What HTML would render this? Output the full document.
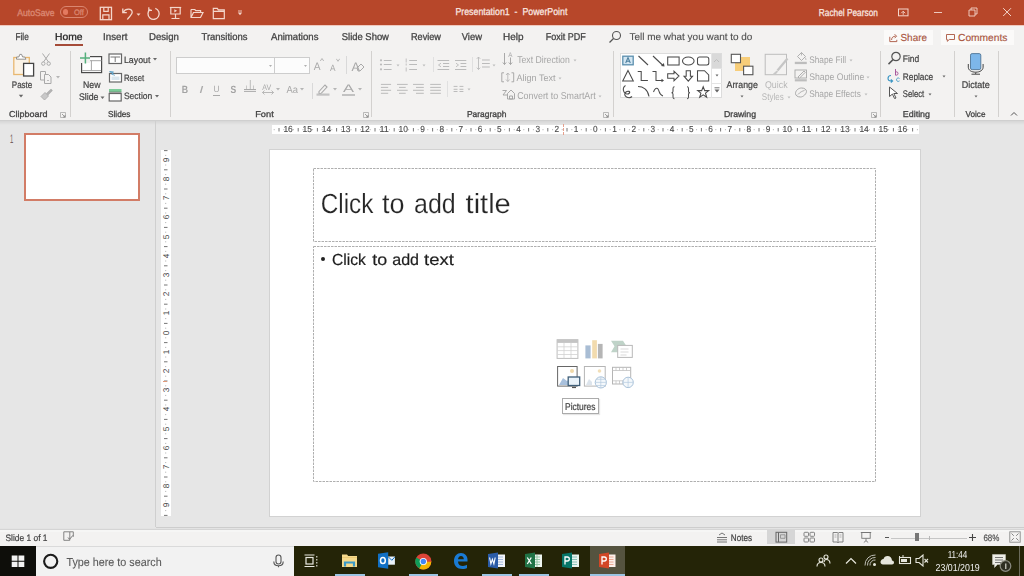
<!DOCTYPE html><html><head><meta charset="utf-8"><style>
html,body{margin:0;padding:0;}
body{width:1024px;height:576px;overflow:hidden;position:relative;background:#E6E6E6;font-family:"Liberation Sans",sans-serif;text-rendering:geometricPrecision;}
div,span,svg{position:absolute;}
span{line-height:1;white-space:pre;transform-origin:0 0;}
</style></head><body>
<div style="left:0px;top:0px;width:1024px;height:25px;background:#B7472A;"></div>
<div style="left:59.8px;top:5.7px;width:28.6px;height:12.8px;background:transparent;border:1.4px solid #DA8670;border-radius:7px;box-sizing:border-box;"></div>
<div style="left:62.7px;top:9.4px;width:5.4px;height:5.4px;background:#E47A60;border-radius:50%;"></div>
<svg style="left:99px;top:6px;" width="14" height="15" viewBox="0 0 14 15"><rect x="1.3" y="1.3" width="11.2" height="12.4" fill="none" stroke="#F4D6CB" stroke-width="1.3"/><path d="M4.8 1.5v3.8h4.4V1.5M3.8 13.5V8.8h6.2v4.7" fill="none" stroke="#F4D6CB" stroke-width="1.2"/></svg>
<svg style="left:121px;top:6px;" width="20" height="15" viewBox="0 0 20 15"><path d="M2.2 6.2C4.5 2.2 11 2 11.2 6.3 11.3 9 8 10.5 6.3 13.5" fill="none" stroke="#F4D6CB" stroke-width="1.3"/><path d="M1.8 2.6v4h4" fill="none" stroke="#F4D6CB" stroke-width="1.3"/><path d="M15.5 7.5h4l-2 2.2z" fill="#F4D6CB"/></svg>
<svg style="left:146px;top:6px;" width="15" height="15" viewBox="0 0 15 15"><path d="M4.3 3.2A5.6 5.6 0 1 0 9.3 2.4" fill="none" stroke="#F4D6CB" stroke-width="1.3"/><path d="M2.8 1.2v3.2h3.2" fill="none" stroke="#F4D6CB" stroke-width="1.2"/></svg>
<svg style="left:169px;top:6px;" width="13" height="14" viewBox="0 0 13 14"><path d="M0.8 1.5h11.4" stroke="#F4D6CB" stroke-width="1.2"/><path d="M1.8 1.5v6.5h9.4V1.5" fill="none" stroke="#F4D6CB" stroke-width="1.2"/><path d="M6.5 8v4M2.5 12.5h8" fill="none" stroke="#F4D6CB" stroke-width="1.2"/><path d="M5.3 3.2l2.8 1.6-2.8 1.6z" fill="#F4D6CB"/></svg>
<svg style="left:190px;top:8px;" width="14" height="11" viewBox="0 0 14 11"><path d="M1 1.5h3.8l1 1.2h4.8v2M1 1.5v8h9.5l2.5-5H3.5L1 9.5" fill="none" stroke="#F4D6CB" stroke-width="1.2"/></svg>
<svg style="left:212px;top:7px;" width="14" height="13" viewBox="0 0 14 13"><path d="M1.3 1.3h4l1 1.5h6v8.9H1.3z M1.3 4.3h11" fill="none" stroke="#F4D6CB" stroke-width="1.2"/></svg>
<svg style="left:237px;top:10px;" width="6" height="6" viewBox="0 0 6 6"><path d="M1 1h4" stroke="#F4D6CB" stroke-width="0.9"/><path d="M0.8 2.6h4.4l-2.2 2.6z" fill="#F4D6CB"/></svg>
<svg style="left:897px;top:8px;" width="12" height="9" viewBox="0 0 12 9"><rect x="1.5" y="1" width="9.5" height="6.8" fill="none" stroke="#F4D6CB" stroke-width="1"/><path d="M4.2 5.2l2-2 2 2M6.2 3.4v3.4" fill="none" stroke="#F4D6CB" stroke-width="0.9"/></svg>
<div style="left:934px;top:12px;width:8px;height:1px;background:#EDC9BE;"></div>
<svg style="left:968px;top:7px;" width="10" height="10" viewBox="0 0 10 10"><path d="M1 3h6v6H1z M3 3V1h6v6H7" fill="none" stroke="#F4D6CB" stroke-width="0.9"/></svg>
<svg style="left:1002px;top:7px;" width="10" height="10" viewBox="0 0 10 10"><path d="M1.2 1.2l7.8 7.8M9 1.2l-7.8 7.8" stroke="#F4D6CB" stroke-width="1"/></svg>
<div style="left:0px;top:25px;width:1024px;height:95px;background:#F3F2F1;"></div>
<div style="left:0px;top:25px;width:1024px;height:1px;background:#F0C9BE;"></div>
<div style="left:55px;top:43.8px;width:28px;height:2px;background:#A54B38;"></div>
<svg style="left:608px;top:30px;" width="14" height="14" viewBox="0 0 14 14"><circle cx="8.5" cy="5.5" r="4" fill="none" stroke="#555" stroke-width="1.1"/><path d="M5.5 8.5l-4 4" stroke="#555" stroke-width="1.3"/></svg>
<div style="left:883.5px;top:29.5px;width:49px;height:15px;background:#FBFAF9;"></div>
<div style="left:941px;top:29.5px;width:73px;height:15px;background:#FBFAF9;"></div>
<svg style="left:889px;top:33px;" width="10" height="10" viewBox="0 0 10 10"><path d="M0.8 3.8v4.8h7V6.8" fill="none" stroke="#A9563F" stroke-width="0.9"/><path d="M2.6 7c0-2.6 1.5-3.8 4-3.8M5.6 1.2l2 2-2 2" fill="none" stroke="#A9563F" stroke-width="0.9"/></svg>
<svg style="left:946px;top:34px;" width="10" height="9" viewBox="0 0 10 9"><path d="M0.5 0.5h8v5H3.3L1.3 7.3V5.5H0.5z" fill="none" stroke="#A9563F" stroke-width="0.9"/></svg>
<div style="left:70px;top:50.7px;width:1px;height:66.3px;background:#D3D1CF;"></div>
<div style="left:169.5px;top:50.7px;width:1px;height:66.3px;background:#D3D1CF;"></div>
<div style="left:371px;top:50.7px;width:1px;height:66.3px;background:#D3D1CF;"></div>
<div style="left:612.8px;top:50.7px;width:1px;height:66.3px;background:#D3D1CF;"></div>
<div style="left:879.8px;top:50.7px;width:1px;height:66.3px;background:#D3D1CF;"></div>
<div style="left:953.5px;top:50.7px;width:1px;height:66.3px;background:#D3D1CF;"></div>
<div style="left:997.5px;top:50.7px;width:1px;height:66.3px;background:#D3D1CF;"></div>
<div style="left:0px;top:120px;width:1024px;height:1px;background:#CFCFCF;"></div>
<div style="left:0px;top:121px;width:1024px;height:4px;background:linear-gradient(#D6D6D6,#E6E6E6);"></div>
<svg style="left:12px;top:52px;" width="24" height="26" viewBox="0 0 24 26"><rect x="1.8" y="5.5" width="15.5" height="17" fill="#FBF3E6" stroke="#E8B871" stroke-width="1.3"/><path d="M4.5 7.2h9.5l-1.2-2.2h-2.2l-1-2.6h-1.8l-1 2.6h-2.2z" fill="#fff" stroke="#888" stroke-width="0.9"/><rect x="11.6" y="11.4" width="10" height="12.6" fill="#fff" stroke="#444" stroke-width="1.3"/></svg>
<svg style="left:18px;top:94px;" width="6" height="4" viewBox="0 0 6 4"><path d="M0.8 0.8h4.4l-2.2 2.6z" fill="#666"/></svg>
<svg style="left:41px;top:53px;" width="10" height="13" viewBox="0 0 10 13"><path d="M1.5 0.5l6 8.5M8.5 0.5l-6 8.5" stroke="#AAA" stroke-width="1"/><circle cx="2.3" cy="10.6" r="1.7" fill="none" stroke="#AAA" stroke-width="1"/><circle cx="7.7" cy="10.6" r="1.7" fill="none" stroke="#AAA" stroke-width="1"/></svg>
<svg style="left:39px;top:71px;" width="14" height="13" viewBox="0 0 14 13"><path d="M1.5 0.5h5v8.5h-5z" fill="none" stroke="#A8A8A8" stroke-width="1"/><path d="M5.5 3.5h4l2.5 2.5v6.5h-6.5z" fill="#F3F2F1" stroke="#A8A8A8" stroke-width="1"/><path d="M8 9.5h2" stroke="#BBB" stroke-width="1"/></svg>
<svg style="left:56px;top:76px;" width="4" height="3" viewBox="0 0 4 3"><path d="M0 0h4l-2 2.5z" fill="#B5B5B5"/></svg>
<svg style="left:40px;top:88px;" width="13" height="13" viewBox="0 0 13 13"><path d="M1 8.5l4-4 3.5 3.5-4 4z" fill="#C8C8C8" stroke="#ABABAB" stroke-width="0.9"/><path d="M6.5 6l4.5-4.5 1 1-4.5 4.5" fill="none" stroke="#ABABAB" stroke-width="1.1"/></svg>
<svg style="left:79px;top:52px;" width="24" height="22" viewBox="0 0 24 22"><rect x="2.6" y="4.6" width="20" height="16" fill="#fff" stroke="#4A4A4A" stroke-width="1.2"/><path d="M2.6 8.7h20M12.4 8.7v9.5M3.2 18.6h19" stroke="#9A9A9A" stroke-width="0.9"/><rect x="1.5" y="3.5" width="9.5" height="7.5" fill="#F3F2F1"/><path d="M6.4 0.6v11M1 6h10" stroke="#55B07C" stroke-width="1.5"/></svg>
<svg style="left:100px;top:96px;" width="5" height="4" viewBox="0 0 5 4"><path d="M0.5 0.5h4l-2 2.5z" fill="#666"/></svg>
<svg style="left:108px;top:53px;" width="15" height="12" viewBox="0 0 15 12"><rect x="1" y="1" width="12.5" height="9.5" fill="#fff" stroke="#666" stroke-width="1.2"/><path d="M2.5 4h9.5M7.2 4v5" stroke="#777" stroke-width="1"/></svg>
<svg style="left:153px;top:58px;" width="4" height="3" viewBox="0 0 4 3"><path d="M0 0h4l-2 2.5z" fill="#666"/></svg>
<svg style="left:108px;top:70px;" width="15" height="13" viewBox="0 0 15 13"><rect x="1.5" y="3.5" width="12" height="8.5" fill="#fff" stroke="#666" stroke-width="1.2"/><path d="M3.5 6.5h8v3.5h-8z" fill="#D9E6EE"/><path d="M1.5 1.5l3.5 0.5-1 3" fill="none" stroke="#5EA1C8" stroke-width="1.2"/><path d="M1.8 1.8c2 0.5 4 2 4.5 4" fill="none" stroke="#5EA1C8" stroke-width="1"/></svg>
<svg style="left:108px;top:88px;" width="15" height="14" viewBox="0 0 15 14"><rect x="1" y="1" width="12.5" height="3" fill="#7CCB98"/><rect x="1.2" y="5.5" width="12" height="7.5" fill="#fff" stroke="#666" stroke-width="1.2"/><path d="M1 4.2h12.5" stroke="#666" stroke-width="0.8"/></svg>
<svg style="left:155px;top:95px;" width="4" height="3" viewBox="0 0 4 3"><path d="M0 0h4l-2 2.5z" fill="#666"/></svg>
<div style="left:176.3px;top:57.2px;width:98.4px;height:16.4px;background:#FCFCFC;border:1px solid #CDCDCD;box-sizing:border-box;"></div>
<div style="left:274.2px;top:57.2px;width:35.4px;height:16.4px;background:#FCFCFC;border:1px solid #CDCDCD;box-sizing:border-box;"></div>
<svg style="left:268.5px;top:64.5px;" width="4" height="3" viewBox="0 0 4 3"><path d="M0 0h3l-1.5 2z" fill="#B0B0B0"/></svg>
<svg style="left:303.5px;top:64.5px;" width="4" height="3" viewBox="0 0 4 3"><path d="M0 0h3l-1.5 2z" fill="#B0B0B0"/></svg>
<svg style="left:320px;top:58px;" width="4" height="4" viewBox="0 0 4 4"><path d="M0.3 3l1.7-2.5 1.7 2.5" fill="none" stroke="#A9A9A9" stroke-width="0.8"/></svg>
<svg style="left:335.5px;top:58px;" width="4" height="4" viewBox="0 0 4 4"><path d="M0.3 0.8l1.7 2.5 1.7-2.5" fill="none" stroke="#A9A9A9" stroke-width="0.8"/></svg>
<div style="left:345.5px;top:56px;width:1px;height:18px;background:#D9D9D9;"></div>
<svg style="left:356px;top:63px;" width="9" height="9" viewBox="0 0 9 9"><path d="M1 5l4-4 3 3-4 4H2z" fill="#F3F2F1" stroke="#A9A9A9" stroke-width="1"/></svg>
<div style="left:213px;top:94.5px;width:7px;height:1px;background:#A9A9A9;"></div>
<svg style="left:243px;top:79px;" width="14" height="14" viewBox="0 0 14 14"><path d="M7.3 1v9" stroke="#B5B5B5" stroke-width="0.9"/><path d="M1 10.5h12M1 12.4h12" stroke="#A9A9A9" stroke-width="1"/><path d="M3.5 10V6.5M10.5 10V6.5" stroke="#BDBDBD" stroke-width="0.8"/></svg>
<svg style="left:261.5px;top:90px;" width="12" height="5" viewBox="0 0 12 5"><path d="M0.5 2.5h11M2.5 0.5l-2 2 2 2M9.5 0.5l2 2-2 2" fill="none" stroke="#A9A9A9" stroke-width="0.8"/></svg>
<svg style="left:276px;top:88px;" width="4" height="3" viewBox="0 0 4 3"><path d="M0 0h4l-2 2.5z" fill="#B5B5B5"/></svg>
<svg style="left:300px;top:88px;" width="4" height="3" viewBox="0 0 4 3"><path d="M0 0h4l-2 2.5z" fill="#B5B5B5"/></svg>
<div style="left:311.6px;top:83px;width:1px;height:16px;background:#D9D9D9;"></div>
<svg style="left:316px;top:82px;" width="14" height="14" viewBox="0 0 14 14"><path d="M3 9.5l6-6.5 2 2-6 6.5H3z" fill="none" stroke="#A9A9A9" stroke-width="1.1"/><rect x="0.5" y="11.5" width="13" height="2.2" fill="#C2C2C2"/></svg>
<svg style="left:333px;top:88px;" width="4" height="3" viewBox="0 0 4 3"><path d="M0 0h4l-2 2.5z" fill="#B5B5B5"/></svg>
<div style="left:342.4px;top:93.5px;width:12.3px;height:2.2px;background:#C2C2C2;"></div>
<svg style="left:358px;top:88px;" width="4" height="3" viewBox="0 0 4 3"><path d="M0 0h4l-2 2.5z" fill="#B5B5B5"/></svg>
<svg style="left:60.2px;top:111.5px;" width="6" height="6" viewBox="0 0 6 6"><path d="M0.5 0.5h5v5h-5z" fill="none" stroke="#AAA" stroke-width="0.8"/><path d="M2 2l3 3M5 3v2H3" fill="none" stroke="#888" stroke-width="0.8"/></svg>
<svg style="left:362.5px;top:111.5px;" width="6" height="6" viewBox="0 0 6 6"><path d="M0.5 0.5h5v5h-5z" fill="none" stroke="#AAA" stroke-width="0.8"/><path d="M2 2l3 3M5 3v2H3" fill="none" stroke="#888" stroke-width="0.8"/></svg>
<svg style="left:603.2px;top:111.5px;" width="6" height="6" viewBox="0 0 6 6"><path d="M0.5 0.5h5v5h-5z" fill="none" stroke="#AAA" stroke-width="0.8"/><path d="M2 2l3 3M5 3v2H3" fill="none" stroke="#888" stroke-width="0.8"/></svg>
<svg style="left:870.8px;top:111.5px;" width="6" height="6" viewBox="0 0 6 6"><path d="M0.5 0.5h5v5h-5z" fill="none" stroke="#AAA" stroke-width="0.8"/><path d="M2 2l3 3M5 3v2H3" fill="none" stroke="#888" stroke-width="0.8"/></svg>
<svg style="left:376px;top:55px;" width="20" height="18" viewBox="0 0 20 18"><circle cx="5" cy="5.3" r="1.1" fill="#BBBBBB"/><circle cx="5" cy="9.5" r="1.1" fill="#BBBBBB"/><circle cx="5" cy="14.3" r="1.1" fill="#BBBBBB"/><path d="M7.8 5.5h7.8" stroke="#BBBBBB" stroke-width="1"/><path d="M7.8 9.5h7.8" stroke="#BBBBBB" stroke-width="1"/><path d="M7.8 14.5h7.8" stroke="#BBBBBB" stroke-width="1"/></svg>
<svg style="left:396.4px;top:64px;" width="4" height="3" viewBox="0 0 4 3"><path d="M0.5 0.5h3l-1.5 2z" fill="#BDBDBD"/></svg>
<svg style="left:403px;top:55px;" width="20" height="18" viewBox="0 0 20 18"><path d="M3.2 3.5v4M3.2 8.5v2M3.2 12.5v4" stroke="#BBBBBB" stroke-width="0.9"/><path d="M6.2 5.5h7.8" stroke="#BBBBBB" stroke-width="1"/><path d="M6.2 9.5h7.8" stroke="#BBBBBB" stroke-width="1"/><path d="M6.2 14.5h7.8" stroke="#BBBBBB" stroke-width="1"/></svg>
<svg style="left:421.8px;top:64px;" width="4" height="3" viewBox="0 0 4 3"><path d="M0.5 0.5h3l-1.5 2z" fill="#BDBDBD"/></svg>
<div style="left:432.6px;top:56.8px;width:1px;height:15.2px;background:#E0E0E0;"></div>
<svg style="left:436px;top:55px;" width="32" height="18" viewBox="0 0 32 18"><path d="M1.5 5.5h11.7" stroke="#BBBBBB" stroke-width="1"/><path d="M7 8.5h6.199999999999999" stroke="#BBBBBB" stroke-width="1"/><path d="M7 11.5h6.199999999999999" stroke="#BBBBBB" stroke-width="1"/><path d="M1.5 14.5h11.7" stroke="#BBBBBB" stroke-width="1"/><path d="M19 5.5h11.3" stroke="#BBBBBB" stroke-width="1"/><path d="M24.5 8.5h5.800000000000001" stroke="#BBBBBB" stroke-width="1"/><path d="M24.5 11.5h5.800000000000001" stroke="#BBBBBB" stroke-width="1"/><path d="M19 14.5h11.3" stroke="#BBBBBB" stroke-width="1"/><path d="M5 8.2l-2.5 1.8 2.5 1.8M20 8.2l2.5 1.8-2.5 1.8" fill="none" stroke="#BBBBBB" stroke-width="0.9"/></svg>
<div style="left:471.7px;top:56.8px;width:1px;height:15.2px;background:#E0E0E0;"></div>
<svg style="left:476px;top:56px;" width="16" height="16" viewBox="0 0 16 16"><path d="M2.5 1v12.5M0.8 2.8l1.7-1.8 1.7 1.8M0.8 11.7l1.7 1.8 1.7-1.8" fill="none" stroke="#BBBBBB" stroke-width="0.9"/><path d="M6 4h7.800000000000001" stroke="#BBBBBB" stroke-width="1"/><path d="M6 7.5h7.800000000000001" stroke="#BBBBBB" stroke-width="1"/><path d="M6 11h7.800000000000001" stroke="#BBBBBB" stroke-width="1"/></svg>
<svg style="left:492.3px;top:63.5px;" width="4" height="3" viewBox="0 0 4 3"><path d="M0.5 0.5h3l-1.5 2z" fill="#BDBDBD"/></svg>
<svg style="left:378px;top:80px;" width="70" height="18" viewBox="0 0 70 18"><path d="M2.9 4.4h10.2" stroke="#BBBBBB" stroke-width="1"/><path d="M2.9 7.4h7.299999999999999" stroke="#BBBBBB" stroke-width="1"/><path d="M2.9 10.3h10.2" stroke="#BBBBBB" stroke-width="1"/><path d="M2.9 13.3h7.299999999999999" stroke="#BBBBBB" stroke-width="1"/><path d="M19 4.4h10.7" stroke="#BBBBBB" stroke-width="1"/><path d="M21 7.4h6.699999999999999" stroke="#BBBBBB" stroke-width="1"/><path d="M19 10.3h10.7" stroke="#BBBBBB" stroke-width="1"/><path d="M21 13.3h6.699999999999999" stroke="#BBBBBB" stroke-width="1"/><path d="M35 4.4h10.799999999999997" stroke="#BBBBBB" stroke-width="1"/><path d="M38 7.4h7.799999999999997" stroke="#BBBBBB" stroke-width="1"/><path d="M35 10.3h10.799999999999997" stroke="#BBBBBB" stroke-width="1"/><path d="M38 13.3h7.799999999999997" stroke="#BBBBBB" stroke-width="1"/><path d="M52.2 4.4h10.699999999999996" stroke="#BBBBBB" stroke-width="1"/><path d="M52.2 7.4h10.699999999999996" stroke="#BBBBBB" stroke-width="1"/><path d="M52.2 10.3h10.699999999999996" stroke="#BBBBBB" stroke-width="1"/><path d="M52.2 13.3h10.699999999999996" stroke="#BBBBBB" stroke-width="1"/></svg>
<div style="left:447.3px;top:81.3px;width:1px;height:15.6px;background:#E0E0E0;"></div>
<svg style="left:452px;top:84px;" width="14" height="10" viewBox="0 0 14 10"><path d="M1.6 2.4h3.9" stroke="#BBBBBB" stroke-width="1"/><path d="M1.6 5.3h3.9" stroke="#BBBBBB" stroke-width="1"/><path d="M1.6 7.5h3.9" stroke="#BBBBBB" stroke-width="1"/><path d="M7.5 2.4h3.9000000000000004" stroke="#BBBBBB" stroke-width="1"/><path d="M7.5 5.3h3.9000000000000004" stroke="#BBBBBB" stroke-width="1"/><path d="M7.5 7.5h3.9000000000000004" stroke="#BBBBBB" stroke-width="1"/></svg>
<svg style="left:467.2px;top:88px;" width="4" height="3" viewBox="0 0 4 3"><path d="M0.5 0.5h3l-1.5 2z" fill="#BDBDBD"/></svg>
<svg style="left:502px;top:52px;" width="13" height="14" viewBox="0 0 13 14"><path d="M2.5 1v11.5M0.8 10.5l1.7 2 1.7-2" fill="none" stroke="#A0A0A0" stroke-width="0.9"/><path d="M8.5 5.5v7M6.8 10.5l1.7 2 1.7-2" fill="none" stroke="#A0A0A0" stroke-width="0.9"/><path d="M6.5 5l1.8-4.5 1.8 4.5M7.2 3.5h2.3" fill="none" stroke="#B0B0B0" stroke-width="0.7"/></svg>
<svg style="left:573.4px;top:59px;" width="4" height="3" viewBox="0 0 4 3"><path d="M0.5 0.5h3l-1.5 2z" fill="#BDBDBD"/></svg>
<svg style="left:501px;top:72px;" width="14" height="11" viewBox="0 0 14 11"><path d="M3 0.8H0.8v9H3M10.5 0.8h2.2v9h-2.2" fill="none" stroke="#A0A0A0" stroke-width="0.9"/><path d="M6.8 1v8.5M5 3l1.8-2 1.8 2M5 7.5l1.8 2 1.8-2" fill="none" stroke="#B0B0B0" stroke-width="0.8"/></svg>
<svg style="left:558px;top:77px;" width="4" height="3" viewBox="0 0 4 3"><path d="M0.5 0.5h3l-1.5 2z" fill="#BDBDBD"/></svg>
<svg style="left:502px;top:89px;" width="13" height="11" viewBox="0 0 13 11"><path d="M0.5 1.5h4L1 6h4M2.5 3.5" fill="none" stroke="#A0A0A0" stroke-width="0.9"/><path d="M5.5 4.5l3.5-3.5 3.5 3.5v5.5h-7z M7.5 7h3v3h-3z" fill="none" stroke="#A0A0A0" stroke-width="0.9"/></svg>
<svg style="left:598.4px;top:94.5px;" width="4" height="3" viewBox="0 0 4 3"><path d="M0.5 0.5h3l-1.5 2z" fill="#BDBDBD"/></svg>
<div style="left:620px;top:52.8px;width:101.7px;height:45px;background:#FFFFFF;border:1px solid #DCDCDC;box-sizing:border-box;"></div>
<div style="left:711.4px;top:53.5px;width:10px;height:14.5px;background:#D9D9D9;"></div>
<div style="left:711.4px;top:68px;width:10.3px;height:1px;background:#E4E4E4;"></div>
<div style="left:711.4px;top:82.6px;width:10.3px;height:1px;background:#E4E4E4;"></div>
<div style="left:711px;top:53px;width:1px;height:44.5px;background:#E4E4E4;"></div>
<svg style="left:713px;top:58px;" width="7" height="5" viewBox="0 0 7 5"><path d="M1 4l2.5-2.5 2.5 2.5" fill="none" stroke="#BBB" stroke-width="0.9"/></svg>
<svg style="left:714.5px;top:74px;" width="4" height="3" viewBox="0 0 4 3"><path d="M0.5 0.5h3l-1.5 2z" fill="#666"/></svg>
<svg style="left:713.5px;top:87px;" width="6" height="6" viewBox="0 0 6 6"><path d="M0.5 0.8h5" stroke="#666" stroke-width="0.9"/><path d="M0.5 2.5h5l-2.5 3z" fill="#666"/></svg>
<svg style="left:620px;top:54.5px;" width="92" height="46" viewBox="0 0 92 46">
<rect x="2.8" y="1.2" width="10.4" height="8.6" fill="#D3E6F2" stroke="#5B8FAE" stroke-width="1.3"/><path d="M5.7 8l2.3-5.5 2.3 5.5M6.6 6.2h2.8" fill="none" stroke="#4A7D9C" stroke-width="1.05"/>
<path d="M18.5 1l9.5 9" stroke="#4A4A4A" stroke-width="1.05"/>
<path d="M33 1l10 9.5" stroke="#4A4A4A" stroke-width="1.05"/><path d="M44.5 11.5l-3.5-0.6 2.9-2.9z" fill="#4A4A4A"/>
<rect x="47.7" y="2" width="11.4" height="8" fill="none" stroke="#4A4A4A" stroke-width="1.05"/>
<ellipse cx="68.3" cy="6" rx="5.8" ry="4" fill="none" stroke="#4A4A4A" stroke-width="1.05"/>
<rect x="77.5" y="2" width="11.3" height="8" rx="2" fill="none" stroke="#4A4A4A" stroke-width="1.05"/>
<path d="M8 15.5l5.3 10.5H2.7z" fill="none" stroke="#4A4A4A" stroke-width="1.05"/>
<path d="M17.7 16.5h3.5v9h6.7" fill="none" stroke="#4A4A4A" stroke-width="1.05"/>
<path d="M32.5 16.5h3.5v9h6.5" fill="none" stroke="#4A4A4A" stroke-width="1.05"/><path d="M44 25.5l-2.5-1.8v3.6z" fill="#4A4A4A"/>
<path d="M47.7 18.7h6.3v-2.5l5 4.8-5 4.8v-2.5h-6.3z" fill="none" stroke="#4A4A4A" stroke-width="1.05"/>
<path d="M66.2 15.7h4.2v5.5h2.2l-4.3 5-4.3-5h2.2z" fill="none" stroke="#4A4A4A" stroke-width="1.05"/>
<path d="M77.5 15.7h7l4.2 4.2v6h-11.2z" fill="none" stroke="#4A4A4A" stroke-width="1.05"/>
<path d="M5.5 30.5c-2 1-3 4-1.5 6.5s4 2.5 5.5 1c1-1.5-1.5-2.5-3.5-1s-1.5 4 0.5 5c2 1 4.5 0.5 5.5-0.5" fill="none" stroke="#4A4A4A" stroke-width="1.1"/>
<path d="M18 31.5c5 0 10 3 11 10" fill="none" stroke="#4A4A4A" stroke-width="1.05"/>
<path d="M33.5 37c1-3 3-5 4.5-3s1 6 5 7" fill="none" stroke="#4A4A4A" stroke-width="1.05"/>
<path d="M54.5 31.8c-1.5 0-1.5 0.5-1.5 2.5v2c0 1-0.5 1.5-1.5 1.5 1 0 1.5 0.5 1.5 1.5v2c0 2 0 2.5 1.5 2.5" fill="none" stroke="#4A4A4A" stroke-width="1.05"/>
<path d="M67 31.8c1.5 0 1.5 0.5 1.5 2.5v2c0 1 0.5 1.5 1.5 1.5-1 0-1.5 0.5-1.5 1.5v2c0 2 0 2.5-1.5 2.5" fill="none" stroke="#4A4A4A" stroke-width="1.05"/>
<path d="M83.2 31.8l1.5 3.8h4l-3.2 2.5 1.2 4.2-3.5-2.5-3.5 2.5 1.2-4.2-3.2-2.5h4z" fill="none" stroke="#4A4A4A" stroke-width="1.05"/>
</svg>
<svg style="left:730px;top:53px;" width="24" height="23" viewBox="0 0 24 23"><rect x="5" y="4" width="15" height="14" fill="#F7CD79"/><rect x="1.3" y="1.3" width="9.2" height="8.4" fill="#fff" stroke="#555" stroke-width="1.1"/><rect x="13.6" y="13.2" width="9.3" height="8.5" fill="#fff" stroke="#555" stroke-width="1.1"/></svg>
<svg style="left:740.4px;top:94.5px;" width="4" height="3" viewBox="0 0 4 3"><path d="M0.5 0.5h3l-1.5 2z" fill="#666"/></svg>
<svg style="left:764px;top:53px;" width="25" height="23" viewBox="0 0 25 23"><rect x="1.2" y="1.3" width="21.3" height="20.4" fill="#F3F2F1" stroke="#BDBDBD" stroke-width="1"/><path d="M23.5 5.5l-10 12" stroke="#C5C5C5" stroke-width="2.2"/><path d="M13 17.5c-1.5 1-3 2-4.5 4l2 0.3c2-1 3-2.3 3.5-3.3z" fill="#C8C8C8"/></svg>
<svg style="left:786.8px;top:95.5px;" width="4" height="3" viewBox="0 0 4 3"><path d="M0.5 0.5h3l-1.5 2z" fill="#BDBDBD"/></svg>
<svg style="left:794px;top:51px;" width="14" height="14" viewBox="0 0 14 14"><path d="M3.5 5.5l4-4 4 4-4 4z" fill="none" stroke="#A8A8A8" stroke-width="0.9"/><path d="M7.5 1.5v3" stroke="#A8A8A8" stroke-width="0.8"/><path d="M11 6.5c0.8 1 1.3 2 0.5 2.5" fill="none" stroke="#AAA" stroke-width="0.8"/><rect x="0.8" y="10.8" width="12" height="2.3" fill="#BDBDBD"/></svg>
<svg style="left:848.5px;top:58.5px;" width="4" height="3" viewBox="0 0 4 3"><path d="M0.5 0.5h3l-1.5 2z" fill="#BDBDBD"/></svg>
<svg style="left:794px;top:69px;" width="14" height="13" viewBox="0 0 14 13"><rect x="1" y="1" width="11.5" height="8" fill="none" stroke="#A8A8A8" stroke-width="0.9"/><path d="M4 8l6-6 1.3 1.3-6 6z" fill="#F3F2F1" stroke="#A8A8A8" stroke-width="0.9"/><rect x="0.8" y="10.2" width="12" height="2.2" fill="#BDBDBD"/></svg>
<svg style="left:866.2px;top:76px;" width="4" height="3" viewBox="0 0 4 3"><path d="M0.5 0.5h3l-1.5 2z" fill="#BDBDBD"/></svg>
<svg style="left:794px;top:87px;" width="14" height="11" viewBox="0 0 14 11"><path d="M1.5 6.5c0-3 3-5.5 6-5.5s5 1.5 5 3.5-3 5.5-6 5.5-5-1.5-5-3.5z" fill="none" stroke="#A8A8A8" stroke-width="1"/><path d="M4 7.5c2-2.5 4.5-3.5 6.5-4" fill="none" stroke="#A8A8A8" stroke-width="0.9"/></svg>
<svg style="left:864.2px;top:92.5px;" width="4" height="3" viewBox="0 0 4 3"><path d="M0.5 0.5h3l-1.5 2z" fill="#BDBDBD"/></svg>
<svg style="left:887px;top:51px;" width="15" height="14" viewBox="0 0 15 14"><circle cx="9" cy="5.5" r="4.2" fill="none" stroke="#555" stroke-width="1.2"/><path d="M6 8.6l-4.5 4.5" stroke="#555" stroke-width="1.5"/></svg>
<svg style="left:887px;top:68px;" width="14" height="15" viewBox="0 0 14 15"><path d="M8.5 1v6.5M8.5 4.5c0.5-1 2.5-1 2.5 1s-2 2-2.5 1" fill="none" stroke="#A04A93" stroke-width="0.9"/><path d="M4 7.5c-2 0-3 1.5-3 3s1 2.5 3 2.5h1.5M3.8 11.5l1.8 1.5-1.8 1.5" fill="none" stroke="#3B96C4" stroke-width="1.1"/><path d="M12.5 10.5c-1-1-3-0.5-3 1.2s2 2.2 3 1.2" fill="none" stroke="#3B96C4" stroke-width="0.9"/></svg>
<svg style="left:941.5px;top:75px;" width="4" height="3" viewBox="0 0 4 3"><path d="M0.5 0.5h3l-1.5 2z" fill="#666"/></svg>
<svg style="left:888px;top:86px;" width="11" height="13" viewBox="0 0 11 13"><path d="M1.5 1l8 6.5H5.8l2.2 4.5-1.4 0.6-2.2-4.5L1.5 10.5z" fill="#fff" stroke="#555" stroke-width="1"/></svg>
<svg style="left:928px;top:92.5px;" width="4" height="3" viewBox="0 0 4 3"><path d="M0.5 0.5h3l-1.5 2z" fill="#666"/></svg>
<svg style="left:966px;top:52px;" width="20" height="24" viewBox="0 0 20 24"><rect x="4.5" y="1.6" width="10.3" height="16" rx="1.6" fill="#7DB7EA" stroke="#4F7596" stroke-width="0.9"/><path d="M2.3 12v3.2c0 3 3.2 5 7.4 5s7.4-2 7.4-5V12" fill="none" stroke="#444" stroke-width="1"/><path d="M9.7 20.5v1.5M5.5 22.2h8.5" stroke="#444" stroke-width="1"/></svg>
<svg style="left:973.8px;top:94.5px;" width="4" height="3" viewBox="0 0 4 3"><path d="M0.5 0.5h3l-1.5 2z" fill="#666"/></svg>
<svg style="left:1010px;top:111px;" width="8" height="6" viewBox="0 0 8 6"><path d="M1 4.5l3-3 3 3" fill="none" stroke="#555" stroke-width="1"/></svg>
<div style="left:155px;top:121px;width:1px;height:406px;background:#CFCFCF;"></div>
<div style="left:24px;top:133px;width:116px;height:68px;background:#FFFFFF;border:2px solid #D27C66;box-sizing:border-box;"></div>
<div style="left:271.5px;top:124.6px;width:647px;height:9.5px;background:#FFFFFF;"></div>
<svg style="left:271.5px;top:124.6px;" width="647" height="9.5" viewBox="0 0 647 9.5"><path d="M2.20 4.2v1" stroke="#999" stroke-width="0.8"/><path d="M7.00 3v3.5" stroke="#666" stroke-width="0.9"/><path d="M11.80 4.2v1" stroke="#999" stroke-width="0.8"/><path d="M21.40 4.2v1" stroke="#999" stroke-width="0.8"/><path d="M26.20 3v3.5" stroke="#666" stroke-width="0.9"/><path d="M31.00 4.2v1" stroke="#999" stroke-width="0.8"/><path d="M40.60 4.2v1" stroke="#999" stroke-width="0.8"/><path d="M45.40 3v3.5" stroke="#666" stroke-width="0.9"/><path d="M50.20 4.2v1" stroke="#999" stroke-width="0.8"/><path d="M59.80 4.2v1" stroke="#999" stroke-width="0.8"/><path d="M64.60 3v3.5" stroke="#666" stroke-width="0.9"/><path d="M69.40 4.2v1" stroke="#999" stroke-width="0.8"/><path d="M79.00 4.2v1" stroke="#999" stroke-width="0.8"/><path d="M83.80 3v3.5" stroke="#666" stroke-width="0.9"/><path d="M88.60 4.2v1" stroke="#999" stroke-width="0.8"/><path d="M98.20 4.2v1" stroke="#999" stroke-width="0.8"/><path d="M103.00 3v3.5" stroke="#666" stroke-width="0.9"/><path d="M107.80 4.2v1" stroke="#999" stroke-width="0.8"/><path d="M117.40 4.2v1" stroke="#999" stroke-width="0.8"/><path d="M122.20 3v3.5" stroke="#666" stroke-width="0.9"/><path d="M127.00 4.2v1" stroke="#999" stroke-width="0.8"/><path d="M136.60 4.2v1" stroke="#999" stroke-width="0.8"/><path d="M141.40 3v3.5" stroke="#666" stroke-width="0.9"/><path d="M146.20 4.2v1" stroke="#999" stroke-width="0.8"/><path d="M155.80 4.2v1" stroke="#999" stroke-width="0.8"/><path d="M160.60 3v3.5" stroke="#666" stroke-width="0.9"/><path d="M165.40 4.2v1" stroke="#999" stroke-width="0.8"/><path d="M175.00 4.2v1" stroke="#999" stroke-width="0.8"/><path d="M179.80 3v3.5" stroke="#666" stroke-width="0.9"/><path d="M184.60 4.2v1" stroke="#999" stroke-width="0.8"/><path d="M194.20 4.2v1" stroke="#999" stroke-width="0.8"/><path d="M199.00 3v3.5" stroke="#666" stroke-width="0.9"/><path d="M203.80 4.2v1" stroke="#999" stroke-width="0.8"/><path d="M213.40 4.2v1" stroke="#999" stroke-width="0.8"/><path d="M218.20 3v3.5" stroke="#666" stroke-width="0.9"/><path d="M223.00 4.2v1" stroke="#999" stroke-width="0.8"/><path d="M232.60 4.2v1" stroke="#999" stroke-width="0.8"/><path d="M237.40 3v3.5" stroke="#666" stroke-width="0.9"/><path d="M242.20 4.2v1" stroke="#999" stroke-width="0.8"/><path d="M251.80 4.2v1" stroke="#999" stroke-width="0.8"/><path d="M256.60 3v3.5" stroke="#666" stroke-width="0.9"/><path d="M261.40 4.2v1" stroke="#999" stroke-width="0.8"/><path d="M271.00 4.2v1" stroke="#999" stroke-width="0.8"/><path d="M275.80 3v3.5" stroke="#666" stroke-width="0.9"/><path d="M280.60 4.2v1" stroke="#999" stroke-width="0.8"/><path d="M290.20 4.2v1" stroke="#999" stroke-width="0.8"/><path d="M295.00 3v3.5" stroke="#666" stroke-width="0.9"/><path d="M299.80 4.2v1" stroke="#999" stroke-width="0.8"/><path d="M309.40 4.2v1" stroke="#999" stroke-width="0.8"/><path d="M314.20 3v3.5" stroke="#666" stroke-width="0.9"/><path d="M319.00 4.2v1" stroke="#999" stroke-width="0.8"/><path d="M328.60 4.2v1" stroke="#999" stroke-width="0.8"/><path d="M333.40 3v3.5" stroke="#666" stroke-width="0.9"/><path d="M338.20 4.2v1" stroke="#999" stroke-width="0.8"/><path d="M347.80 4.2v1" stroke="#999" stroke-width="0.8"/><path d="M352.60 3v3.5" stroke="#666" stroke-width="0.9"/><path d="M357.40 4.2v1" stroke="#999" stroke-width="0.8"/><path d="M367.00 4.2v1" stroke="#999" stroke-width="0.8"/><path d="M371.80 3v3.5" stroke="#666" stroke-width="0.9"/><path d="M376.60 4.2v1" stroke="#999" stroke-width="0.8"/><path d="M386.20 4.2v1" stroke="#999" stroke-width="0.8"/><path d="M391.00 3v3.5" stroke="#666" stroke-width="0.9"/><path d="M395.80 4.2v1" stroke="#999" stroke-width="0.8"/><path d="M405.40 4.2v1" stroke="#999" stroke-width="0.8"/><path d="M410.20 3v3.5" stroke="#666" stroke-width="0.9"/><path d="M415.00 4.2v1" stroke="#999" stroke-width="0.8"/><path d="M424.60 4.2v1" stroke="#999" stroke-width="0.8"/><path d="M429.40 3v3.5" stroke="#666" stroke-width="0.9"/><path d="M434.20 4.2v1" stroke="#999" stroke-width="0.8"/><path d="M443.80 4.2v1" stroke="#999" stroke-width="0.8"/><path d="M448.60 3v3.5" stroke="#666" stroke-width="0.9"/><path d="M453.40 4.2v1" stroke="#999" stroke-width="0.8"/><path d="M463.00 4.2v1" stroke="#999" stroke-width="0.8"/><path d="M467.80 3v3.5" stroke="#666" stroke-width="0.9"/><path d="M472.60 4.2v1" stroke="#999" stroke-width="0.8"/><path d="M482.20 4.2v1" stroke="#999" stroke-width="0.8"/><path d="M487.00 3v3.5" stroke="#666" stroke-width="0.9"/><path d="M491.80 4.2v1" stroke="#999" stroke-width="0.8"/><path d="M501.40 4.2v1" stroke="#999" stroke-width="0.8"/><path d="M506.20 3v3.5" stroke="#666" stroke-width="0.9"/><path d="M511.00 4.2v1" stroke="#999" stroke-width="0.8"/><path d="M520.60 4.2v1" stroke="#999" stroke-width="0.8"/><path d="M525.40 3v3.5" stroke="#666" stroke-width="0.9"/><path d="M530.20 4.2v1" stroke="#999" stroke-width="0.8"/><path d="M539.80 4.2v1" stroke="#999" stroke-width="0.8"/><path d="M544.60 3v3.5" stroke="#666" stroke-width="0.9"/><path d="M549.40 4.2v1" stroke="#999" stroke-width="0.8"/><path d="M559.00 4.2v1" stroke="#999" stroke-width="0.8"/><path d="M563.80 3v3.5" stroke="#666" stroke-width="0.9"/><path d="M568.60 4.2v1" stroke="#999" stroke-width="0.8"/><path d="M578.20 4.2v1" stroke="#999" stroke-width="0.8"/><path d="M583.00 3v3.5" stroke="#666" stroke-width="0.9"/><path d="M587.80 4.2v1" stroke="#999" stroke-width="0.8"/><path d="M597.40 4.2v1" stroke="#999" stroke-width="0.8"/><path d="M602.20 3v3.5" stroke="#666" stroke-width="0.9"/><path d="M607.00 4.2v1" stroke="#999" stroke-width="0.8"/><path d="M616.60 4.2v1" stroke="#999" stroke-width="0.8"/><path d="M621.40 3v3.5" stroke="#666" stroke-width="0.9"/><path d="M626.20 4.2v1" stroke="#999" stroke-width="0.8"/><path d="M635.80 4.2v1" stroke="#999" stroke-width="0.8"/><path d="M640.60 3v3.5" stroke="#666" stroke-width="0.9"/><path d="M645.40 4.2v1" stroke="#999" stroke-width="0.8"/></svg>
<div style="left:563px;top:124px;width:1px;height:11px;background:transparent;border-left:1px dashed #E6A08C;box-sizing:border-box;"></div>
<div style="left:161px;top:149.6px;width:9.5px;height:366px;background:#FFFFFF;"></div>
<svg style="left:161px;top:149.6px;" width="9.5" height="366" viewBox="0 0 9.5 366"><path d="M3 0.60h3.5" stroke="#666" stroke-width="0.9"/><path d="M4.2 5.40h1" stroke="#999" stroke-width="0.8"/><path d="M4.2 15.00h1" stroke="#999" stroke-width="0.8"/><path d="M3 19.80h3.5" stroke="#666" stroke-width="0.9"/><path d="M4.2 24.60h1" stroke="#999" stroke-width="0.8"/><path d="M4.2 34.20h1" stroke="#999" stroke-width="0.8"/><path d="M3 39.00h3.5" stroke="#666" stroke-width="0.9"/><path d="M4.2 43.80h1" stroke="#999" stroke-width="0.8"/><path d="M4.2 53.40h1" stroke="#999" stroke-width="0.8"/><path d="M3 58.20h3.5" stroke="#666" stroke-width="0.9"/><path d="M4.2 63.00h1" stroke="#999" stroke-width="0.8"/><path d="M4.2 72.60h1" stroke="#999" stroke-width="0.8"/><path d="M3 77.40h3.5" stroke="#666" stroke-width="0.9"/><path d="M4.2 82.20h1" stroke="#999" stroke-width="0.8"/><path d="M4.2 91.80h1" stroke="#999" stroke-width="0.8"/><path d="M3 96.60h3.5" stroke="#666" stroke-width="0.9"/><path d="M4.2 101.40h1" stroke="#999" stroke-width="0.8"/><path d="M4.2 111.00h1" stroke="#999" stroke-width="0.8"/><path d="M3 115.80h3.5" stroke="#666" stroke-width="0.9"/><path d="M4.2 120.60h1" stroke="#999" stroke-width="0.8"/><path d="M4.2 130.20h1" stroke="#999" stroke-width="0.8"/><path d="M3 135.00h3.5" stroke="#666" stroke-width="0.9"/><path d="M4.2 139.80h1" stroke="#999" stroke-width="0.8"/><path d="M4.2 149.40h1" stroke="#999" stroke-width="0.8"/><path d="M3 154.20h3.5" stroke="#666" stroke-width="0.9"/><path d="M4.2 159.00h1" stroke="#999" stroke-width="0.8"/><path d="M4.2 168.60h1" stroke="#999" stroke-width="0.8"/><path d="M3 173.40h3.5" stroke="#666" stroke-width="0.9"/><path d="M4.2 178.20h1" stroke="#999" stroke-width="0.8"/><path d="M4.2 187.80h1" stroke="#999" stroke-width="0.8"/><path d="M3 192.60h3.5" stroke="#666" stroke-width="0.9"/><path d="M4.2 197.40h1" stroke="#999" stroke-width="0.8"/><path d="M4.2 207.00h1" stroke="#999" stroke-width="0.8"/><path d="M3 211.80h3.5" stroke="#666" stroke-width="0.9"/><path d="M4.2 216.60h1" stroke="#999" stroke-width="0.8"/><path d="M4.2 226.20h1" stroke="#999" stroke-width="0.8"/><path d="M3 231.00h3.5" stroke="#666" stroke-width="0.9"/><path d="M4.2 235.80h1" stroke="#999" stroke-width="0.8"/><path d="M4.2 245.40h1" stroke="#999" stroke-width="0.8"/><path d="M3 250.20h3.5" stroke="#666" stroke-width="0.9"/><path d="M4.2 255.00h1" stroke="#999" stroke-width="0.8"/><path d="M4.2 264.60h1" stroke="#999" stroke-width="0.8"/><path d="M3 269.40h3.5" stroke="#666" stroke-width="0.9"/><path d="M4.2 274.20h1" stroke="#999" stroke-width="0.8"/><path d="M4.2 283.80h1" stroke="#999" stroke-width="0.8"/><path d="M3 288.60h3.5" stroke="#666" stroke-width="0.9"/><path d="M4.2 293.40h1" stroke="#999" stroke-width="0.8"/><path d="M4.2 303.00h1" stroke="#999" stroke-width="0.8"/><path d="M3 307.80h3.5" stroke="#666" stroke-width="0.9"/><path d="M4.2 312.60h1" stroke="#999" stroke-width="0.8"/><path d="M4.2 322.20h1" stroke="#999" stroke-width="0.8"/><path d="M3 327.00h3.5" stroke="#666" stroke-width="0.9"/><path d="M4.2 331.80h1" stroke="#999" stroke-width="0.8"/><path d="M4.2 341.40h1" stroke="#999" stroke-width="0.8"/><path d="M3 346.20h3.5" stroke="#666" stroke-width="0.9"/><path d="M4.2 351.00h1" stroke="#999" stroke-width="0.8"/><path d="M4.2 360.60h1" stroke="#999" stroke-width="0.8"/><path d="M3 365.40h3.5" stroke="#666" stroke-width="0.9"/></svg>
<span style="left:162.80px;top:156.80px;width:6px;height:6px;font-size:8.3px;line-height:6px;text-align:center;color:#444;transform:rotate(-90deg);transform-origin:50% 50%;">9</span>
<span style="left:162.80px;top:176.00px;width:6px;height:6px;font-size:8.3px;line-height:6px;text-align:center;color:#444;transform:rotate(-90deg);transform-origin:50% 50%;">8</span>
<span style="left:162.80px;top:195.20px;width:6px;height:6px;font-size:8.3px;line-height:6px;text-align:center;color:#444;transform:rotate(-90deg);transform-origin:50% 50%;">7</span>
<span style="left:162.80px;top:214.40px;width:6px;height:6px;font-size:8.3px;line-height:6px;text-align:center;color:#444;transform:rotate(-90deg);transform-origin:50% 50%;">6</span>
<span style="left:162.80px;top:233.60px;width:6px;height:6px;font-size:8.3px;line-height:6px;text-align:center;color:#444;transform:rotate(-90deg);transform-origin:50% 50%;">5</span>
<span style="left:162.80px;top:252.80px;width:6px;height:6px;font-size:8.3px;line-height:6px;text-align:center;color:#444;transform:rotate(-90deg);transform-origin:50% 50%;">4</span>
<span style="left:162.80px;top:272.00px;width:6px;height:6px;font-size:8.3px;line-height:6px;text-align:center;color:#444;transform:rotate(-90deg);transform-origin:50% 50%;">3</span>
<span style="left:162.80px;top:291.20px;width:6px;height:6px;font-size:8.3px;line-height:6px;text-align:center;color:#444;transform:rotate(-90deg);transform-origin:50% 50%;">2</span>
<span style="left:162.80px;top:310.40px;width:6px;height:6px;font-size:8.3px;line-height:6px;text-align:center;color:#444;transform:rotate(-90deg);transform-origin:50% 50%;">1</span>
<span style="left:162.80px;top:329.60px;width:6px;height:6px;font-size:8.3px;line-height:6px;text-align:center;color:#444;transform:rotate(-90deg);transform-origin:50% 50%;">0</span>
<span style="left:162.80px;top:348.80px;width:6px;height:6px;font-size:8.3px;line-height:6px;text-align:center;color:#444;transform:rotate(-90deg);transform-origin:50% 50%;">1</span>
<span style="left:162.80px;top:368.00px;width:6px;height:6px;font-size:8.3px;line-height:6px;text-align:center;color:#444;transform:rotate(-90deg);transform-origin:50% 50%;">2</span>
<span style="left:162.80px;top:387.20px;width:6px;height:6px;font-size:8.3px;line-height:6px;text-align:center;color:#444;transform:rotate(-90deg);transform-origin:50% 50%;">3</span>
<span style="left:162.80px;top:406.40px;width:6px;height:6px;font-size:8.3px;line-height:6px;text-align:center;color:#444;transform:rotate(-90deg);transform-origin:50% 50%;">4</span>
<span style="left:162.80px;top:425.60px;width:6px;height:6px;font-size:8.3px;line-height:6px;text-align:center;color:#444;transform:rotate(-90deg);transform-origin:50% 50%;">5</span>
<span style="left:162.80px;top:444.80px;width:6px;height:6px;font-size:8.3px;line-height:6px;text-align:center;color:#444;transform:rotate(-90deg);transform-origin:50% 50%;">6</span>
<span style="left:162.80px;top:464.00px;width:6px;height:6px;font-size:8.3px;line-height:6px;text-align:center;color:#444;transform:rotate(-90deg);transform-origin:50% 50%;">7</span>
<span style="left:162.80px;top:483.20px;width:6px;height:6px;font-size:8.3px;line-height:6px;text-align:center;color:#444;transform:rotate(-90deg);transform-origin:50% 50%;">8</span>
<span style="left:162.80px;top:502.40px;width:6px;height:6px;font-size:8.3px;line-height:6px;text-align:center;color:#444;transform:rotate(-90deg);transform-origin:50% 50%;">9</span>
<div style="left:163px;top:381px;width:4px;height:1px;background:#E29A7A;"></div>
<div style="left:269px;top:149px;width:652px;height:368px;background:#D2D2D2;"></div>
<div style="left:270px;top:150px;width:650px;height:366px;background:#FFFFFF;"></div>
<svg style="left:312px;top:167px;" width="566" height="316" viewBox="0 0 566 316"><rect x="1.5" y="1.5" width="562" height="73" fill="none" stroke="#AFAFAF" stroke-width="1" stroke-dasharray="2.5 1"/><rect x="1.5" y="79.5" width="562" height="235" fill="none" stroke="#AFAFAF" stroke-width="1" stroke-dasharray="2.5 1"/></svg>
<div style="left:320.5px;top:256.5px;width:4.5px;height:4.5px;background:#222;border-radius:50%;"></div>
<svg style="left:550px;top:335px;" width="90" height="60" viewBox="0 0 90 60">
<rect x="7.1" y="4.7" width="20.8" height="18.7" fill="#FFFFFF" stroke="#BDBDBD" stroke-width="1"/><rect x="7.1" y="4.7" width="20.8" height="3.2" fill="#C4C4C4"/>
<path d="M7.1 11.8h20.8M7.1 15.6h20.8M7.1 19.5h20.8M14 7.9v15.5M21 7.9v15.5" stroke="#D2D2D2" stroke-width="0.8"/>
<rect x="35.4" y="10.4" width="5.2" height="13" fill="#A9BDD4"/><rect x="42.2" y="5.2" width="4.7" height="18.2" fill="#F2DBAE"/><rect x="47.9" y="8.9" width="4.7" height="14.5" fill="#B5B5B5"/>
<path d="M61 5.7h12l3.5 5.5-3.5 6h-12l3.5-6z" fill="#BFD3C8"/><rect x="67.7" y="10.4" width="14.6" height="12" fill="#fff" stroke="#B8B8B8" stroke-width="1"/><path d="M70.5 14h8M70.5 17h8M70.5 20h6" stroke="#C8C8C8" stroke-width="0.7"/>
<rect x="7.6" y="31.5" width="19.5" height="19.6" fill="#fff" stroke="#666" stroke-width="1"/><circle cx="22" cy="36" r="2" fill="#F0D9A8"/><path d="M9 50l4-7 4 3 3-2v6z" fill="#A8C0DC"/>
<rect x="18.2" y="42" width="11.5" height="8.5" fill="#EAF3FA" stroke="#3F5E78" stroke-width="1.3"/><path d="M22 52.5h4" stroke="#555" stroke-width="1.2"/>
<rect x="34.4" y="31.5" width="20.8" height="19.6" fill="#fff" stroke="#B5B5B5" stroke-width="1"/><circle cx="49.5" cy="36" r="1.8" fill="#F2DFB8"/><path d="M36 50l3-6 3 3v3z" fill="#DCE4EC"/>
<circle cx="50.8" cy="47.4" r="5.6" fill="#F4F8FB" stroke="#A9C2DA" stroke-width="1"/><path d="M45.2 47.4h11.2M50.8 41.8v11.2M46.3 44.3h9M46.3 50.5h9" stroke="#B6CCE0" stroke-width="0.7"/>
<rect x="62.5" y="32.3" width="18.2" height="16.7" fill="#fff" stroke="#B5B5B5" stroke-width="1"/><path d="M62.5 35.5h18.2M62.5 45.8h18.2M66 32.3v3.2M69.5 32.3v3.2M73 32.3v3.2M76.5 32.3v3.2M66 45.8v3.2M69.5 45.8v3.2M73 45.8v3.2" stroke="#C2C2C2" stroke-width="0.8"/>
<circle cx="78.1" cy="47.4" r="5.2" fill="#F4F8FB" stroke="#A9C2DA" stroke-width="1"/><path d="M72.9 47.4h10.4M78.1 42.2v10.4" stroke="#B6CCE0" stroke-width="0.7"/>
</svg>
<div style="left:561.9px;top:398px;width:36.7px;height:15.6px;background:#FFFFFF;border:1px solid #ABABAB;box-sizing:border-box;box-shadow:1px 1px 1px rgba(0,0,0,0.10);"></div>
<div style="left:156px;top:527px;width:868px;height:1px;background:#CDCDCD;"></div>
<div style="left:0px;top:528px;width:1024px;height:1px;background:#E3E3E3;"></div>
<div style="left:0px;top:529px;width:1024px;height:1px;background:#D5D5D5;"></div>
<div style="left:0px;top:530px;width:1024px;height:16px;background:#F3F2F1;"></div>
<div style="left:0px;top:530px;width:1024px;height:2px;background:#F6F6F5;"></div>
<svg style="left:63px;top:531px;" width="12" height="11" viewBox="0 0 12 11"><path d="M0.8 0.8h6v8.5h-6z" fill="none" stroke="#777" stroke-width="0.9"/><path d="M6.8 0.8h3.5v5" fill="none" stroke="#777" stroke-width="0.9"/><path d="M5 6.5l1.5 1.8 3.5-4" fill="none" stroke="#777" stroke-width="1"/></svg>
<svg style="left:716px;top:532px;" width="12" height="11" viewBox="0 0 12 11"><path d="M3 3l3-2 3 2" fill="none" stroke="#666" stroke-width="0.9"/><path d="M1 5.5h10M1 7.8h10M1 10h10" stroke="#666" stroke-width="0.9"/></svg>
<div style="left:767.3px;top:529.7px;width:27.5px;height:14.8px;background:#D6D6D6;"></div>
<svg style="left:775px;top:531px;" width="13" height="13" viewBox="0 0 13 13"><rect x="1" y="1.3" width="10.7" height="9.8" fill="none" stroke="#666" stroke-width="1"/><path d="M3.5 1.3v9.8" stroke="#666" stroke-width="1"/><path d="M5.5 3.8h4.5v3.5h-4.5z" fill="none" stroke="#888" stroke-width="0.8"/></svg>
<svg style="left:803px;top:531px;" width="13" height="13" viewBox="0 0 13 13"><rect x="1" y="1.3" width="4.5" height="4" rx="0.8" fill="none" stroke="#777" stroke-width="0.9"/><rect x="7" y="1.3" width="4.5" height="4" rx="0.8" fill="none" stroke="#777" stroke-width="0.9"/><rect x="1" y="7" width="4.5" height="4" rx="0.8" fill="none" stroke="#777" stroke-width="0.9"/><rect x="7" y="7" width="4.5" height="4" rx="0.8" fill="none" stroke="#777" stroke-width="0.9"/></svg>
<svg style="left:832px;top:531px;" width="12" height="13" viewBox="0 0 12 13"><path d="M1 1.5h4.5l0.7 0.7 0.7-0.7H11v9.5H7l-1 0.8-1-0.8H1z M6 2.2v9" fill="none" stroke="#777" stroke-width="0.9"/><path d="M2.5 4h2M2.5 6h2M7.5 4h2M7.5 6h2" stroke="#999" stroke-width="0.7"/></svg>
<svg style="left:860px;top:531px;" width="12" height="13" viewBox="0 0 12 13"><path d="M0.8 1.5h10.4" stroke="#777" stroke-width="1"/><rect x="1.8" y="1.5" width="8.4" height="5.8" fill="none" stroke="#777" stroke-width="0.9"/><path d="M6 7.3v2.5M3.8 11.5l2.2-1.8 2.2 1.8" fill="none" stroke="#777" stroke-width="0.9"/></svg>
<div style="left:884.5px;top:537.2px;width:4.3px;height:1.2px;background:#555;"></div>
<div style="left:891px;top:537.5px;width:75.7px;height:1px;background:#C6C6C6;"></div>
<div style="left:929.1px;top:535.5px;width:1px;height:4.5px;background:#B8B8B8;"></div>
<div style="left:915px;top:533.3px;width:3.8px;height:8px;background:#777;"></div>
<svg style="left:969px;top:534px;" width="7" height="7" viewBox="0 0 7 7"><path d="M3.5 0v7M0 3.5h7" stroke="#444" stroke-width="1.1"/></svg>
<svg style="left:1009px;top:531px;" width="12" height="12" viewBox="0 0 12 12"><rect x="0.8" y="0.8" width="10.4" height="10.4" fill="none" stroke="#8A8A8A" stroke-width="0.9"/><path d="M2.5 2.5l2.3 2.3M9.5 2.5l-2.3 2.3M2.5 9.5l2.3-2.3M9.5 9.5l-2.3-2.3" stroke="#777" stroke-width="0.9"/></svg>
<div style="left:0px;top:546px;width:1024px;height:30px;background:#242407;"></div>
<div style="left:0px;top:546px;width:36px;height:30px;background:#0E0E0A;"></div>
<svg style="left:11px;top:554px;" width="14" height="14" viewBox="0 0 14 14"><path d="M0.7 1.5h5.8v5.3H0.7z M7.5 1.5h5.8v5.3H7.5z M0.7 7.8h5.8v5.3H0.7z M7.5 7.8h5.8v5.3H7.5z" fill="#F2F2F2"/></svg>
<div style="left:36px;top:546px;width:258px;height:30px;background:#F2F2F2;"></div>
<div style="left:36px;top:546px;width:258px;height:1px;background:#DADADA;"></div>
<svg style="left:42px;top:553px;" width="18" height="17" viewBox="0 0 18 17"><circle cx="8.7" cy="8.3" r="6.6" fill="none" stroke="#1B1B1B" stroke-width="2.1"/></svg>
<svg style="left:272px;top:554px;" width="13" height="14" viewBox="0 0 13 14"><rect x="4" y="1" width="5" height="9" rx="2.5" fill="none" stroke="#555" stroke-width="1.1"/><path d="M1.8 7.5c0 2.8 2 4.3 4.7 4.3s4.7-1.5 4.7-4.3M6.5 11.8v1.5" fill="none" stroke="#555" stroke-width="1.1"/></svg>
<svg style="left:303px;top:554px;" width="16" height="14" viewBox="0 0 16 14"><path d="M1.5 1h10M1.5 12.5h10" stroke="#E8E8E0" stroke-width="1.2"/><rect x="3" y="3.5" width="7" height="6.5" fill="none" stroke="#E8E8E0" stroke-width="1.2"/><path d="M13.8 2v1.5M13.8 5v1.5M13.8 8v1.5M13.8 11v1.5" stroke="#E8E8E0" stroke-width="1.1"/></svg>
<svg style="left:341px;top:553px;" width="18" height="15" viewBox="0 0 18 15"><path d="M1 1.5h5l1.2 1.5H16v11H1z" fill="#F5D98B"/><path d="M1 4.5h15" stroke="#E8C66F" stroke-width="0.8"/><path d="M4 13.5v-4h9v4" fill="none" stroke="#3A9AC9" stroke-width="2.2"/></svg>
<div style="left:335px;top:574px;width:30px;height:2px;background:#9BC4E2;"></div>
<svg style="left:377px;top:552px;" width="19" height="17" viewBox="0 0 19 17"><path d="M1 1.8l10.2-1.6v16.6L1 15.2z" fill="#1170C4"/><ellipse cx="5.9" cy="8.5" rx="2.4" ry="3.1" fill="none" stroke="#fff" stroke-width="1.5"/><rect x="11.2" y="4.5" width="6.7" height="8.2" fill="#EAF2FA"/><path d="M11.5 5l3.3 3.3 3-3.3" fill="none" stroke="#1170C4" stroke-width="1"/></svg>
<svg style="left:414px;top:553px;" width="19" height="17" viewBox="0 0 19 17"><circle cx="9.3" cy="8.5" r="8" fill="#DB4437"/><path d="M9.3 8.5L2.3 4.4A8 8 0 0 0 5.3 15.4z" fill="#0F9D58"/><path d="M9.3 8.5L5.3 15.4A8 8 0 0 0 17.3 8.5z" fill="#F4B400"/><path d="M9.3 8.5L17.3 8.5A8 8 0 0 0 16.3 4.5H9.3z" fill="#DB4437"/><circle cx="9.3" cy="8.5" r="3.6" fill="#fff"/><circle cx="9.3" cy="8.5" r="2.7" fill="#4285F4"/></svg>
<div style="left:408.7px;top:574px;width:29.7px;height:2px;background:#9BC4E2;"></div>
<svg style="left:452px;top:552px;" width="17" height="17" viewBox="0 0 17 17"><path d="M2 9c0-5 3-8 7-8s6.5 3 6.5 6.5v2H6c0 3 2 4.5 5 4.5 1.5 0 3-0.5 4-1.2v3.2c-1 0.6-2.5 1-4.5 1C5 17 2 13.5 2 9zm4-1.8h5.8c0-2-1-3.3-2.8-3.3S6.3 5.2 6 7.2z" fill="#1A7BD4"/></svg>
<svg style="left:487px;top:552px;" width="19" height="17" viewBox="0 0 19 17"><rect x="8" y="2.5" width="10" height="12.5" fill="#F2F5FA"/><path d="M10 5h6M10 7.5h6M10 10h6M10 12.5h6" stroke="#9BB3D9" stroke-width="0.9"/><path d="M1 2l10-1.5v16l-10-1.5z" fill="#2B5CA8"/><path d="M2.6 5.5l1.3 6.3 1.5-4.5 1.5 4.5 1.3-6.3" fill="none" stroke="#fff" stroke-width="1.1"/></svg>
<div style="left:482px;top:574px;width:29.5px;height:2px;background:#9BC4E2;"></div>
<svg style="left:524px;top:552px;" width="19" height="17" viewBox="0 0 19 17"><rect x="8" y="2.5" width="10" height="12.5" fill="#EFF6F1"/><path d="M10 5h6M10 7.5h6M10 10h6M10 12.5h6M13 3v12" stroke="#8FC3A0" stroke-width="0.9"/><path d="M1 2l10-1.5v16l-10-1.5z" fill="#217346"/><path d="M3.3 5.5l4 6.5M7.3 5.5l-4 6.5" stroke="#fff" stroke-width="1.3"/></svg>
<div style="left:518.8px;top:574px;width:30px;height:2px;background:#9BC4E2;"></div>
<svg style="left:561px;top:552px;" width="19" height="17" viewBox="0 0 19 17"><rect x="8" y="2.5" width="10" height="12.5" fill="#E9F3F1"/><path d="M10 5h6M10 7.5h6M10 10h6M10 12.5h6" stroke="#80BDB2" stroke-width="0.9"/><path d="M1 2l10-1.5v16l-10-1.5z" fill="#077568"/><path d="M4 12.5V5h2.3a2 2 0 0 1 0 4H4" fill="none" stroke="#fff" stroke-width="1.3"/></svg>
<div style="left:589.6px;top:546px;width:35.4px;height:30px;background:#55533F;"></div>
<svg style="left:598px;top:552px;" width="19" height="17" viewBox="0 0 19 17"><rect x="8" y="2.5" width="9.5" height="12.5" fill="#FCEEE9"/><path d="M10.5 5h5M10.5 7.5h5M10.5 10h5M10.5 12.5h5" stroke="#E8A08A" stroke-width="0.9"/><path d="M1 2l10-1.5v16l-10-1.5z" fill="#D24726"/><path d="M4 12.5V5h2.3a2 2 0 0 1 0 4H4" fill="none" stroke="#fff" stroke-width="1.3"/></svg>
<div style="left:589.6px;top:574px;width:35.4px;height:2px;background:#9BC4E2;"></div>
<svg style="left:816px;top:554px;" width="15" height="13" viewBox="0 0 15 13"><circle cx="5" cy="6" r="2" fill="none" stroke="#E6E6DC" stroke-width="1.1"/><path d="M1 12.5c0-2.5 1.8-4 4-4s4 1.5 4 4" fill="none" stroke="#E6E6DC" stroke-width="1.1"/><circle cx="10" cy="3" r="2" fill="none" stroke="#E6E6DC" stroke-width="1.1"/><path d="M8 8c0.5-2 1-2.5 2-2.5 2.2 0 4 1.5 4 4" fill="none" stroke="#E6E6DC" stroke-width="1.1"/></svg>
<svg style="left:845px;top:557px;" width="12" height="8" viewBox="0 0 12 8"><path d="M1 6.5l5-5 5 5" fill="none" stroke="#E6E6DC" stroke-width="1.2"/></svg>
<svg style="left:864px;top:554px;" width="13" height="13" viewBox="0 0 13 13"><path d="M1 11.5a10 10 0 0 1 10.5-10.5M1 11.5M3.5 11.5a7.5 7.5 0 0 1 8-8M6 11.5a5 5 0 0 1 5.5-5.5" fill="none" stroke="#BDBDB5" stroke-width="1"/><circle cx="10.5" cy="10.5" r="1.5" fill="#E6E6DC"/></svg>
<svg style="left:880px;top:554px;" width="14" height="11" viewBox="0 0 14 11"><path d="M3 10.5h9c1.2 0 2-0.8 2-2s-1-2-2-2c0-2.5-2-4.5-4.5-4.5-2 0-3.5 1.2-4 3C1.8 5 0.5 6.5 0.5 8s1 2.5 2.5 2.5z" fill="#E6E6DC"/></svg>
<svg style="left:898px;top:554px;" width="14" height="12" viewBox="0 0 14 12"><rect x="1.5" y="3.5" width="11" height="6" fill="none" stroke="#E6E6DC" stroke-width="1.1"/><rect x="3" y="5" width="6" height="3" fill="#E6E6DC"/><path d="M1.5 2v2M5 1v2" stroke="#E6E6DC" stroke-width="1"/></svg>
<svg style="left:915px;top:554px;" width="14" height="13" viewBox="0 0 14 13"><path d="M1 4.5h3l4-3.5v11l-4-3.5H1z" fill="none" stroke="#E6E6DC" stroke-width="1.1"/><path d="M9.5 5l3.5 3.5M13 5l-3.5 3.5" stroke="#E6E6DC" stroke-width="1.1"/></svg>
<svg style="left:991px;top:553px;" width="22" height="19" viewBox="0 0 22 19"><path d="M1.5 1.5h13v10h-8l-3 3v-3H1.5z" fill="#EDEDE5" stroke="#CFCFC7" stroke-width="0.5"/><path d="M4 4.5h8M4 7h8M4 9.5h6" stroke="#555" stroke-width="0.8"/><circle cx="14.5" cy="13" r="5.3" fill="#2E2E22" stroke="#8A8A80" stroke-width="1.2"/><path d="M14.8 10.5v5.5" stroke="#E6E6DC" stroke-width="1.1"/></svg>
<div style="left:1018.5px;top:546px;width:1px;height:30px;background:#6A6A5A;"></div>
<svg width="1024" height="576" style="left:0;top:0;white-space:pre;filter:grayscale(1);"><text transform="translate(15.50 40.30) scale(0.8321 1)" font-size="9.88" fill="#444" stroke="#444" stroke-width="0.3">File</text>
<text transform="translate(55.00 40.30) scale(1.0429 1)" font-size="9.88" fill="#262626" stroke="#262626" stroke-width="0.3">Home</text>
<text transform="translate(103.00 40.30) scale(0.9911 1)" font-size="9.88" fill="#444" stroke="#444" stroke-width="0.3">Insert</text>
<text transform="translate(149.00 40.30) scale(0.9750 1)" font-size="9.88" fill="#444" stroke="#444" stroke-width="0.3">Design</text>
<text transform="translate(201.50 40.30) scale(0.9588 1)" font-size="9.88" fill="#444" stroke="#444" stroke-width="0.3">Transitions</text>
<text transform="translate(271.00 40.30) scale(0.9715 1)" font-size="9.88" fill="#444" stroke="#444" stroke-width="0.3">Animations</text>
<text transform="translate(341.75 40.30) scale(0.9550 1)" font-size="9.88" fill="#444" stroke="#444" stroke-width="0.3">Slide Show</text>
<text transform="translate(411.00 40.30) scale(0.9248 1)" font-size="9.88" fill="#444" stroke="#444" stroke-width="0.3">Review</text>
<text transform="translate(461.75 40.30) scale(0.9521 1)" font-size="9.88" fill="#444" stroke="#444" stroke-width="0.3">View</text>
<text transform="translate(503.00 40.30) scale(1.0083 1)" font-size="9.88" fill="#444" stroke="#444" stroke-width="0.3">Help</text>
<text transform="translate(545.75 40.30) scale(0.9105 1)" font-size="9.88" fill="#444" stroke="#444" stroke-width="0.3">Foxit PDF</text>
<text transform="translate(629.50 40.30) scale(1.0085 1)" font-size="9.88" fill="#505050" stroke="#505050" stroke-width="0.12">Tell me what you want to do</text>
<text transform="translate(9.00 116.70) scale(1.0489 1)" font-size="8.58" fill="#444444" stroke="#444444" stroke-width="0.3">Clipboard</text>
<text transform="translate(108.00 116.70) scale(0.9632 1)" font-size="8.58" fill="#444444" stroke="#444444" stroke-width="0.3">Slides</text>
<text transform="translate(255.20 116.70) scale(1.0781 1)" font-size="8.58" fill="#444444" stroke="#444444" stroke-width="0.3">Font</text>
<text transform="translate(466.90 116.70) scale(0.9863 1)" font-size="8.58" fill="#444444" stroke="#444444" stroke-width="0.3">Paragraph</text>
<text transform="translate(724.00 116.70) scale(1.0173 1)" font-size="8.58" fill="#444444" stroke="#444444" stroke-width="0.3">Drawing</text>
<text transform="translate(902.80 116.70) scale(1.0372 1)" font-size="8.58" fill="#444444" stroke="#444444" stroke-width="0.3">Editing</text>
<text transform="translate(965.50 116.70) scale(0.9535 1)" font-size="8.58" fill="#444444" stroke="#444444" stroke-width="0.3">Voice</text>
<text transform="translate(11.80 87.60) scale(0.8357 1)" font-size="9.59" fill="#444444" stroke="#444444" stroke-width="0.22">Paste</text>
<text transform="translate(83.00 87.50) scale(0.9108 1)" font-size="9.59" fill="#444444" stroke="#444444" stroke-width="0.22">New</text>
<text transform="translate(79.00 100.00) scale(0.9140 1)" font-size="9.59" fill="#444444" stroke="#444444" stroke-width="0.22">Slide</text>
<text transform="translate(123.90 62.90) scale(0.9640 1)" font-size="9.16" fill="#444444" stroke="#444444" stroke-width="0.22">Layout</text>
<text transform="translate(123.90 80.75) scale(0.8446 1)" font-size="9.16" fill="#444444" stroke="#444444" stroke-width="0.22">Reset</text>
<text transform="translate(123.90 98.50) scale(0.9300 1)" font-size="9.16" fill="#444444" stroke="#444444" stroke-width="0.22">Section</text>
<text transform="translate(313.70 70.00) scale(0.9352 1)" font-size="10.90" fill="#A9A9A9">A</text>
<text transform="translate(330.00 70.50) scale(0.9150 1)" font-size="9.01" fill="#A9A9A9">A</text>
<text transform="translate(351.60 71.00) scale(1.0193 1)" font-size="12.35" fill="#A9A9A9">A</text>
<text transform="translate(181.70 92.70) scale(0.8338 1)" font-size="10.47" fill="#A3A3A3" font-weight="bold">B</text>
<text transform="translate(199.20 92.70) scale(1.4495 1)" font-size="10.17" fill="#A9A9A9" font-style="italic">I</text>
<text transform="translate(213.50 92.00) scale(0.9222 1)" font-size="9.01" fill="#A9A9A9">U</text>
<text transform="translate(230.60 92.70) scale(0.8166 1)" font-size="10.47" fill="#A3A3A3" font-weight="bold">S</text>
<text transform="translate(262.30 89.50) scale(0.8678 1)" font-size="8.14" fill="#A9A9A9">AV</text>
<text transform="translate(286.40 92.70) scale(0.9234 1)" font-size="10.17" fill="#A9A9A9">Aa</text>
<text transform="translate(343.00 91.50) scale(1.4929 1)" font-size="11.05" fill="#A9A9A9">A</text>
<text transform="translate(517.20 63.00) scale(0.8785 1)" font-size="9.88" fill="#A6A6A6">Text Direction</text>
<text transform="translate(516.50 80.80) scale(0.9562 1)" font-size="9.45" fill="#A6A6A6">Align Text</text>
<text transform="translate(517.20 99.00) scale(0.9000 1)" font-size="9.88" fill="#A6A6A6">Convert to SmartArt</text>
<text transform="translate(726.60 88.30) scale(0.9005 1)" font-size="9.74" fill="#444444" stroke="#444444" stroke-width="0.22">Arrange</text>
<text transform="translate(764.90 88.30) scale(0.9113 1)" font-size="9.74" fill="#B8B8B8">Quick</text>
<text transform="translate(761.80 100.10) scale(0.8259 1)" font-size="9.74" fill="#B8B8B8">Styles</text>
<text transform="translate(809.20 62.70) scale(0.8673 1)" font-size="9.59" fill="#A6A6A6">Shape Fill</text>
<text transform="translate(809.20 80.10) scale(0.9062 1)" font-size="9.59" fill="#A6A6A6">Shape Outline</text>
<text transform="translate(809.20 96.80) scale(0.8681 1)" font-size="9.59" fill="#A6A6A6">Shape Effects</text>
<text transform="translate(902.80 62.30) scale(0.8843 1)" font-size="9.59" fill="#444444" stroke="#444444" stroke-width="0.22">Find</text>
<text transform="translate(902.80 80.00) scale(0.8637 1)" font-size="9.59" fill="#444444" stroke="#444444" stroke-width="0.22">Replace</text>
<text transform="translate(902.80 97.00) scale(0.8027 1)" font-size="9.59" fill="#444444" stroke="#444444" stroke-width="0.22">Select</text>
<text transform="translate(961.70 88.30) scale(0.9272 1)" font-size="9.74" fill="#444444" stroke="#444444" stroke-width="0.22">Dictate</text>
<text transform="translate(283.40 132.30) scale(0.9693 1)" font-size="8.72" fill="#4A4A4A" stroke="#4A4A4A" stroke-width="0.12">16</text>
<text transform="translate(302.60 132.30) scale(0.9693 1)" font-size="8.72" fill="#4A4A4A" stroke="#4A4A4A" stroke-width="0.12">15</text>
<text transform="translate(321.80 132.30) scale(0.9693 1)" font-size="8.72" fill="#4A4A4A" stroke="#4A4A4A" stroke-width="0.12">14</text>
<text transform="translate(341.00 132.30) scale(0.9693 1)" font-size="8.72" fill="#4A4A4A" stroke="#4A4A4A" stroke-width="0.12">13</text>
<text transform="translate(360.20 132.30) scale(0.9693 1)" font-size="8.72" fill="#4A4A4A" stroke="#4A4A4A" stroke-width="0.12">12</text>
<text transform="translate(379.40 132.30) scale(1.0384 1)" font-size="8.72" fill="#4A4A4A" stroke="#4A4A4A" stroke-width="0.12">11</text>
<text transform="translate(398.60 132.30) scale(0.9693 1)" font-size="8.72" fill="#4A4A4A" stroke="#4A4A4A" stroke-width="0.12">10</text>
<text transform="translate(420.20 132.30) scale(0.9487 1)" font-size="8.72" fill="#4A4A4A" stroke="#4A4A4A" stroke-width="0.12">9</text>
<text transform="translate(439.40 132.30) scale(0.9487 1)" font-size="8.72" fill="#4A4A4A" stroke="#4A4A4A" stroke-width="0.12">8</text>
<text transform="translate(458.60 132.30) scale(0.9487 1)" font-size="8.72" fill="#4A4A4A" stroke="#4A4A4A" stroke-width="0.12">7</text>
<text transform="translate(477.80 132.30) scale(0.9487 1)" font-size="8.72" fill="#4A4A4A" stroke="#4A4A4A" stroke-width="0.12">6</text>
<text transform="translate(497.00 132.30) scale(0.9487 1)" font-size="8.72" fill="#4A4A4A" stroke="#4A4A4A" stroke-width="0.12">5</text>
<text transform="translate(516.20 132.30) scale(0.9487 1)" font-size="8.72" fill="#4A4A4A" stroke="#4A4A4A" stroke-width="0.12">4</text>
<text transform="translate(535.40 132.30) scale(0.9487 1)" font-size="8.72" fill="#4A4A4A" stroke="#4A4A4A" stroke-width="0.12">3</text>
<text transform="translate(554.60 132.30) scale(0.9487 1)" font-size="8.72" fill="#4A4A4A" stroke="#4A4A4A" stroke-width="0.12">2</text>
<text transform="translate(573.80 132.30) scale(0.9487 1)" font-size="8.72" fill="#4A4A4A" stroke="#4A4A4A" stroke-width="0.12">1</text>
<text transform="translate(593.00 132.30) scale(0.9487 1)" font-size="8.72" fill="#4A4A4A" stroke="#4A4A4A" stroke-width="0.12">0</text>
<text transform="translate(612.20 132.30) scale(0.9487 1)" font-size="8.72" fill="#4A4A4A" stroke="#4A4A4A" stroke-width="0.12">1</text>
<text transform="translate(631.40 132.30) scale(0.9487 1)" font-size="8.72" fill="#4A4A4A" stroke="#4A4A4A" stroke-width="0.12">2</text>
<text transform="translate(650.60 132.30) scale(0.9487 1)" font-size="8.72" fill="#4A4A4A" stroke="#4A4A4A" stroke-width="0.12">3</text>
<text transform="translate(669.80 132.30) scale(0.9487 1)" font-size="8.72" fill="#4A4A4A" stroke="#4A4A4A" stroke-width="0.12">4</text>
<text transform="translate(689.00 132.30) scale(0.9487 1)" font-size="8.72" fill="#4A4A4A" stroke="#4A4A4A" stroke-width="0.12">5</text>
<text transform="translate(708.20 132.30) scale(0.9487 1)" font-size="8.72" fill="#4A4A4A" stroke="#4A4A4A" stroke-width="0.12">6</text>
<text transform="translate(727.40 132.30) scale(0.9487 1)" font-size="8.72" fill="#4A4A4A" stroke="#4A4A4A" stroke-width="0.12">7</text>
<text transform="translate(746.60 132.30) scale(0.9487 1)" font-size="8.72" fill="#4A4A4A" stroke="#4A4A4A" stroke-width="0.12">8</text>
<text transform="translate(765.80 132.30) scale(0.9487 1)" font-size="8.72" fill="#4A4A4A" stroke="#4A4A4A" stroke-width="0.12">9</text>
<text transform="translate(782.60 132.30) scale(0.9693 1)" font-size="8.72" fill="#4A4A4A" stroke="#4A4A4A" stroke-width="0.12">10</text>
<text transform="translate(801.80 132.30) scale(1.0384 1)" font-size="8.72" fill="#4A4A4A" stroke="#4A4A4A" stroke-width="0.12">11</text>
<text transform="translate(821.00 132.30) scale(0.9693 1)" font-size="8.72" fill="#4A4A4A" stroke="#4A4A4A" stroke-width="0.12">12</text>
<text transform="translate(840.20 132.30) scale(0.9693 1)" font-size="8.72" fill="#4A4A4A" stroke="#4A4A4A" stroke-width="0.12">13</text>
<text transform="translate(859.40 132.30) scale(0.9693 1)" font-size="8.72" fill="#4A4A4A" stroke="#4A4A4A" stroke-width="0.12">14</text>
<text transform="translate(878.60 132.30) scale(0.9693 1)" font-size="8.72" fill="#4A4A4A" stroke="#4A4A4A" stroke-width="0.12">15</text>
<text transform="translate(897.80 132.30) scale(0.9693 1)" font-size="8.72" fill="#4A4A4A" stroke="#4A4A4A" stroke-width="0.12">16</text>
<text transform="translate(320.70 212.60) scale(0.8798 1)" font-size="27.62" fill="#262626" stroke="#FFFFFF" stroke-width="0.2">Click</text>
<text transform="translate(382.00 212.60) scale(0.9769 1)" font-size="27.62" fill="#262626" stroke="#FFFFFF" stroke-width="0.2">to</text>
<text transform="translate(414.00 212.60) scale(0.9053 1)" font-size="27.62" fill="#262626" stroke="#FFFFFF" stroke-width="0.2">add</text>
<text transform="translate(465.60 212.60) scale(1.0495 1)" font-size="27.62" fill="#262626" stroke="#FFFFFF" stroke-width="0.2">title</text>
<text transform="translate(332.00 265.00) scale(0.9804 1)" font-size="15.99" fill="#1E1E1E" stroke="#1E1E1E" stroke-width="0.2">Click</text>
<text transform="translate(372.30 265.00) scale(1.1174 1)" font-size="15.99" fill="#1E1E1E" stroke="#1E1E1E" stroke-width="0.2">to</text>
<text transform="translate(392.20 265.00) scale(1.0049 1)" font-size="15.99" fill="#1E1E1E" stroke="#1E1E1E" stroke-width="0.2">add</text>
<text transform="translate(424.00 265.00) scale(1.1562 1)" font-size="15.99" fill="#1E1E1E" stroke="#1E1E1E" stroke-width="0.2">text</text>
<text transform="translate(565.00 409.70) scale(0.8543 1)" font-size="9.88" fill="#444" stroke="#444" stroke-width="0.22">Pictures</text>
<text transform="translate(5.50 541.00) scale(0.9025 1)" font-size="9.30" fill="#444" stroke="#444" stroke-width="0.22">Slide 1 of 1</text>
<text transform="translate(730.80 541.00) scale(0.8461 1)" font-size="9.59" fill="#444" stroke="#444" stroke-width="0.22">Notes</text>
<text transform="translate(983.40 540.60) scale(0.8596 1)" font-size="9.30" fill="#555" stroke="#555" stroke-width="0.22">68%</text>
<text transform="translate(66.40 565.50) scale(0.9273 1)" font-size="11.63" fill="#5A5A5A" stroke="#5A5A5A" stroke-width="0.1">Type here to search</text>
<text transform="translate(947.70 557.50) scale(0.7975 1)" font-size="10.17" fill="#F0F0E8">11:44</text>
<text transform="translate(935.60 571.00) scale(0.8680 1)" font-size="10.17" fill="#F0F0E8">23/01/2019</text></svg>
<svg width="1024" height="576" style="left:0;top:0;white-space:pre;"><text transform="translate(17.20 15.60) scale(0.8991 1)" font-size="9.59" fill="#DA8670" stroke="#DA8670" stroke-width="0.4">AutoSave</text>
<text transform="translate(73.90 15.20) scale(0.9667 1)" font-size="7.85" fill="#DA8670" stroke="#DA8670" stroke-width="0.3">Off</text>
<text transform="translate(455.40 15.40) scale(0.8663 1)" font-size="10.17" fill="#FBE9E3" stroke="#FBE9E3" stroke-width="0.25">Presentation1 &#160;- &#160;PowerPoint</text>
<text transform="translate(818.75 16.40) scale(0.8185 1)" font-size="10.17" fill="#FBE9E3" stroke="#FBE9E3" stroke-width="0.25">Rachel Pearson</text>
<text transform="translate(900.50 40.50) scale(0.9762 1)" font-size="10.17" fill="#A9563F" stroke="#A9563F" stroke-width="0.15">Share</text>
<text transform="translate(958.00 40.50) scale(1.0062 1)" font-size="10.17" fill="#A9563F" stroke="#A9563F" stroke-width="0.15">Comments</text>
<text transform="translate(9.90 143.30) scale(0.4804 1)" font-size="12.35" fill="#756262">1</text></svg>
</body></html>
